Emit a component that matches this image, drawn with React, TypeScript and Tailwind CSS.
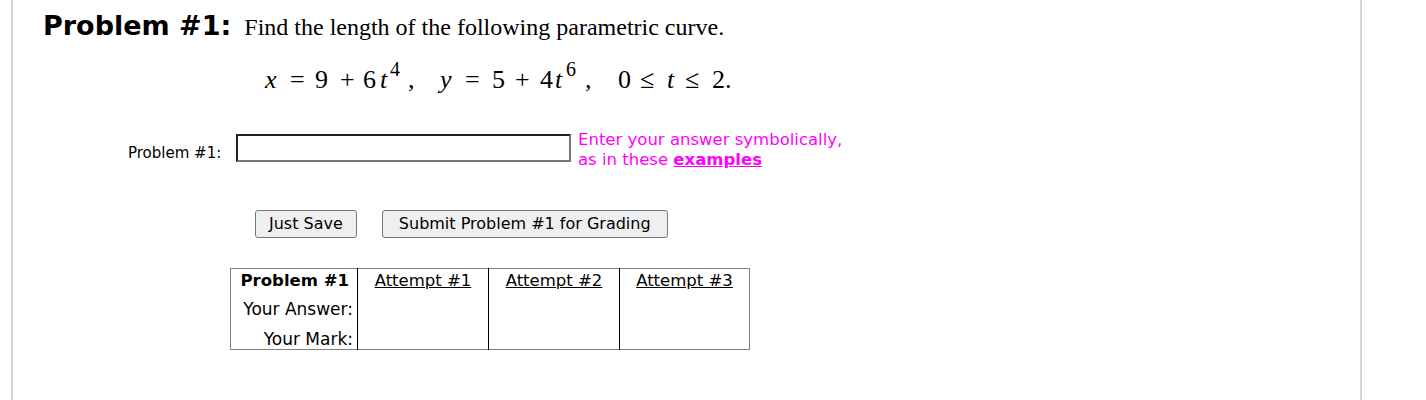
import React from 'react';

const sans = { fontFamily: '"DejaVu Sans", Verdana, sans-serif' };
const serif = { fontFamily: '"Liberation Serif", "Times New Roman", serif' };

const attempts = ['Attempt #1', 'Attempt #2', 'Attempt #3'];

// each glyph gets its own slot so the spacing matches the typeset formula
const Slot = ({ w, children, it, sup }: { w: string; children: React.ReactNode; it?: boolean; sup?: boolean }) => (
    <span className={`inline-block ${w} ${it ? 'italic' : ''} ${sup ? 'align-[12px] text-[20px]' : ''}`}>{children}</span>
);

export default function App() {
    return (
        <div className="h-[400px] bg-white">
            <div className="ml-[11px] h-full w-[1351px] border-x-2 border-[#d6d6d6] bg-white" style={sans}>
                <div className="flex items-baseline pl-[30px] pt-[6px]">
                    <span className="text-[27px] font-bold text-black">Problem #1:</span>
                    <span className="ml-[13px] text-[24px] text-black" style={serif}>Find the length of the following parametric curve.</span>
                </div>

                <div className="mt-[7px] pl-[252px] text-[26px] leading-[30px] text-black whitespace-nowrap" style={serif}>
                    <Slot w="w-[25px]" it>x</Slot>
                    <Slot w="w-[25px]">=</Slot>
                    <Slot w="w-[25px]">9</Slot>
                    <Slot w="w-[23px]">+</Slot>
                    <Slot w="w-[17px]">6</Slot>
                    <Slot w="w-[10px]" it>t</Slot>
                    <Slot w="w-[18px]" sup>4</Slot>
                    <Slot w="w-[32px]">,</Slot>
                    <Slot w="w-[25px]" it>y</Slot>
                    <Slot w="w-[27px]">=</Slot>
                    <Slot w="w-[23px]">5</Slot>
                    <Slot w="w-[25px]">+</Slot>
                    <Slot w="w-[15px]">4</Slot>
                    <Slot w="w-[11px]" it>t</Slot>
                    <Slot w="w-[19px]" sup>6</Slot>
                    <Slot w="w-[33px]">,</Slot>
                    <Slot w="w-[22px]">0</Slot>
                    <Slot w="w-[27px]">≤</Slot>
                    <Slot w="w-[18px]" it>t</Slot>
                    <Slot w="w-[27px]">≤</Slot>
                    <Slot w="w-[13px]">2</Slot>
                    <Slot w="w-[10px]">.</Slot>
                </div>

                <div className="mt-[39px] flex items-start">
                    <span className="ml-[115px] mt-[8px] w-[108px] text-[15px] text-black">Problem #1:</span>
                    <input
                        type="text"
                        className="h-[28px] w-[335px] border-2 border-t-[#222] border-l-[#222] border-b-[#777] border-r-[#777] bg-white"
                    />
                    <div className="ml-[7px] -mt-[4px] text-[16.5px] leading-[20px] text-[#ff00ff]">
                        <div>Enter your answer symbolically,</div>
                        <div>
                            as in these <a className="font-bold underline">examples</a>
                        </div>
                    </div>
                </div>

                <div className="mt-[40px] flex pl-[242px] gap-[25px]">
                    <button className="h-[28px] rounded-[3px] border border-[#767676] bg-[#efefef] px-[13px] text-[16px] text-black">
                        Just Save
                    </button>
                    <button className="h-[28px] rounded-[3px] border border-[#767676] bg-[#efefef] px-[16px] text-[16px] text-black">
                        Submit Problem #1 for Grading
                    </button>
                </div>

                <table className="ml-[217px] mt-[30px] border border-[#808080] text-[16.5px] text-black">
                    <tbody>
                        <tr className="h-[27px]">
                            <th className="w-[127px] border-r border-black pr-[8px] pb-[2px] text-right font-bold">Problem #1</th>
                            {attempts.map((a, i) => (
                                <th key={a} className={`${i < 2 ? 'w-[131px] border-r border-black' : 'w-[130px]'} pb-[2px] text-center font-normal`}>
                                    <a className="underline">{a}</a>
                                </th>
                            ))}
                        </tr>
                        <tr className="h-[29px]">
                            <td className="border-r border-black pr-[4px] text-right text-[17px]">Your Answer:</td>
                            <td className="border-r border-black"></td>
                            <td className="border-r border-black"></td>
                            <td></td>
                        </tr>
                        <tr className="h-[25px]">
                            <td className="border-r border-black pr-[4px] pt-[4px] text-right text-[17px] leading-[20px]">Your Mark:</td>
                            <td className="border-r border-black"></td>
                            <td className="border-r border-black"></td>
                            <td></td>
                        </tr>
                    </tbody>
                </table>
            </div>
        </div>
    );
}
